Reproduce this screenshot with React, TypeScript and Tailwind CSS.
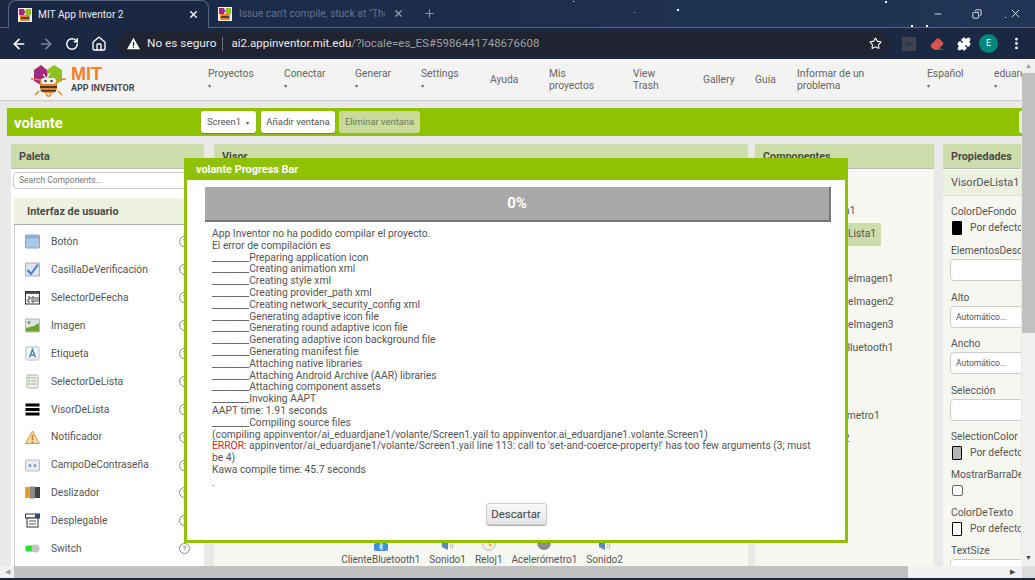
import React from 'react';
import { ArrowLeft, ArrowRight, RotateCw, Home, Star, Puzzle, MoreVertical, X, Plus, Minus, Copy, Eraser } from 'lucide-react';

function Favicon({ className }: { className: string }) {
  return (
    <svg viewBox="0 0 14 14" className={className}>
      <rect width="14" height="14" fill="#f4f4f4" />
      <polygon points="1,1 6,1 7,4 6,7 1,7" fill="#a6277f" />
      <polygon points="8,1 13,1 13,7 8,7 7,4" fill="#8dc21f" />
      <rect x="2" y="7" width="10" height="6" rx="1" fill="#f58220" />
      <rect x="3" y="9" width="8" height="2" fill="#444" />
    </svg>
  );
}

function Logo() {
  return (
    <svg viewBox="0 0 42 34" className="w-[42px] h-[34px] shrink-0">
      <polygon points="3,7 10,2 16,7 16,18 10,22 3,18" fill="#a6277f" transform="translate(1 0)" />
      <polygon points="17,7 24,2 32,7 32,18 24,22 17,18" fill="#8dc21f" />
      <path d="M1 16 L11 17 M36 16 L26 17" stroke="#f58220" strokeWidth="1.5" />
      <path d="M13 11 l3 4 M20 10 l-3 5" stroke="#fff" strokeWidth="1.2" />
      <rect x="10" y="15" width="17" height="15" rx="5" fill="#f58220" />
      <rect x="11" y="15" width="15" height="6" rx="3" fill="#f4f4f4" />
      <circle cx="15.5" cy="18" r="1.2" fill="#333" />
      <circle cx="21.5" cy="18" r="1.2" fill="#333" />
      <rect x="10" y="23" width="17" height="2" fill="#3a3a3a" />
      <rect x="11" y="27" width="15" height="1.6" fill="#3a3a3a" />
      <path d="M9 28 L5 32 M28 28 L32 32 M16 31 L18.5 34 L21 31" stroke="#f58220" strokeWidth="1.5" fill="none" />
    </svg>
  );
}

function PaletteIcon({ name }: { name: string }) {
  const cls = 'w-[15px] h-[15px] shrink-0';
  switch (name) {
    case 'Botón':
      return (
        <svg viewBox="0 0 15 15" className={cls}>
          <rect x="0.5" y="1" width="14" height="13" rx="1" fill="#a9c8e8" stroke="#8aa4c0" />
          <rect x="1" y="1.5" width="13" height="3" fill="#8fb0d6" />
        </svg>
      );
    case 'CasillaDeVerificación':
      return (
        <svg viewBox="0 0 15 15" className={cls}>
          <rect x="0.5" y="1" width="14" height="13" fill="#dfe3ea" stroke="#aab2bd" />
          <path d="M2.5 8 L6 12 L13 2.5" stroke="#3c7fd0" strokeWidth="2" fill="none" />
        </svg>
      );
    case 'SelectorDeFecha':
      return (
        <svg viewBox="0 0 15 15" className={cls}>
          <rect x="0.5" y="1.5" width="14" height="12.5" fill="#fff" stroke="#333" />
          <rect x="1" y="2" width="13" height="2" fill="#555" />
          <path d="M3 7 h2 v2 h-2 v3 h2 M7 7 h2 v5 h-2 z M11 7 v5 M13 7 v5" stroke="#333" strokeWidth="0.9" fill="none" />
        </svg>
      );
    case 'Imagen':
      return (
        <svg viewBox="0 0 15 15" className={cls}>
          <rect x="0.5" y="1" width="14" height="13" fill="#dfe3df" stroke="#b5bcb5" />
          <circle cx="4" cy="4.5" r="1.6" fill="#8a9a8a" />
          <path d="M1 13.5 L1 10 L9 8 L14 5 L14 13.5 Z" fill="#6aa52a" />
        </svg>
      );
    case 'Etiqueta':
      return (
        <svg viewBox="0 0 15 15" className={cls}>
          <rect x="1" y="1" width="13" height="13" rx="1" fill="#f1f4f8" stroke="#b4bdc8" />
          <path d="M4.5 11.5 L7.5 3.5 L10.5 11.5 M5.6 9 H9.4" stroke="#4a7cc0" strokeWidth="1.4" fill="none" />
        </svg>
      );
    case 'SelectorDeLista':
      return (
        <svg viewBox="0 0 15 15" className={cls}>
          <rect x="2" y="1" width="11" height="13" rx="1" fill="#f1f2ec" stroke="#aeb2a8" />
          <path d="M3.5 4 h1.5 M3.5 7 h1.5 M3.5 10 h1.5" stroke="#7db32e" strokeWidth="1.4" />
          <path d="M6 4 h5.5 M6 7 h5.5 M6 10 h5.5" stroke="#a8aca2" strokeWidth="1" />
        </svg>
      );
    case 'VisorDeLista':
      return (
        <svg viewBox="0 0 15 15" className={cls}>
          <rect x="0.5" y="1.5" width="14" height="3" fill="#000" />
          <rect x="0.5" y="6" width="14" height="3" fill="#000" />
          <rect x="0.5" y="10.5" width="14" height="3" fill="#000" />
        </svg>
      );
    case 'Notificador':
      return (
        <svg viewBox="0 0 15 15" className={cls}>
          <polygon points="7.5,1 14.5,13.5 0.5,13.5" fill="#f6d9a0" stroke="#d89a4a" />
          <path d="M7.5 5 V10" stroke="#d0812a" strokeWidth="1.6" />
          <circle cx="7.5" cy="12" r="0.9" fill="#d0812a" />
        </svg>
      );
    case 'CampoDeContraseña':
      return (
        <svg viewBox="0 0 15 15" className={cls}>
          <rect x="0.5" y="2" width="14" height="11" rx="1" fill="#e9edf2" stroke="#b8bec6" />
          <circle cx="5" cy="7.5" r="1.2" fill="#5a86c0" />
          <circle cx="10" cy="7.5" r="1.2" fill="#5a86c0" />
        </svg>
      );
    case 'Deslizador':
      return (
        <svg viewBox="0 0 15 15" className={cls}>
          <rect x="0" y="2" width="5" height="11" fill="#e8a33a" />
          <rect x="5" y="1.5" width="5" height="12" fill="#8a8a8a" />
          <rect x="10" y="2" width="5" height="11" fill="#444" />
          <path d="M2.5 4 v7" stroke="#a85d10" strokeDasharray="1 1.5" />
        </svg>
      );
    case 'Desplegable':
      return (
        <svg viewBox="0 0 15 15" className={cls}>
          <rect x="0.5" y="1" width="14" height="4" fill="#fff" stroke="#333" />
          <rect x="10" y="1" width="4.5" height="4" fill="#2a4f80" />
          <rect x="2" y="5" width="11" height="9" fill="#fff" stroke="#333" />
          <path d="M4 8 h7 M4 11 h7" stroke="#555" />
        </svg>
      );
    default:
      return (
        <svg viewBox="0 0 15 15" className={cls}>
          <rect x="0.5" y="4.5" width="9" height="6" rx="1.5" fill="#22e022" />
          <circle cx="10.5" cy="7.5" r="4" fill="#c4c4c4" />
        </svg>
      );
  }
}

function NonVisibleIcon({ name }: { name: string }) {
  const cls = 'w-[14px] h-[8px] shrink-0';
  if (name === 'ClienteBluetooth1') {
    return (
      <svg viewBox="0 0 14 8" className={cls}>
        <rect width="14" height="8" rx="2" fill="#3f8fe0" />
        <path d="M7 0 V7 M5 2 L9 5 L7 7 M5 5 L9 2 L7 0" stroke="#fff" strokeWidth="0.8" fill="none" />
      </svg>
    );
  }
  if (name === 'Reloj1') {
    return (
      <svg viewBox="0 0 14 8" className={cls}>
        <circle cx="7" cy="1" r="6.5" fill="#f3eee0" stroke="#bbb" />
        <path d="M7 1 L9 3" stroke="#f58220" strokeWidth="1.5" />
      </svg>
    );
  }
  if (name === 'Acelerómetro1') {
    return (
      <svg viewBox="0 0 14 8" className={cls}>
        <circle cx="7" cy="0" r="7" fill="#8c8c8c" />
      </svg>
    );
  }
  return (
    <svg viewBox="0 0 14 8" className={cls}>
      <polygon points="1,0 7,0 7,7 1,4" fill="#5a86c0" />
      <path d="M9 1 q2 2 0 4 M11 0 q2 3 0 6" stroke="#aaa" strokeWidth="0.8" fill="none" />
    </svg>
  );
}

function HelpMark() {
  return (
    <span className="ml-auto mr-[14px] w-[11px] h-[11px] rounded-full border border-[#888] text-[8px] leading-[9px] text-center text-[#666] shrink-0">
      ?
    </span>
  );
}

const navItems = [
  { label: 'Proyectos', width: 'w-[76px]', caret: true },
  { label: 'Conectar', width: 'w-[71px]', caret: true },
  { label: 'Generar', width: 'w-[66px]', caret: true },
  { label: 'Settings', width: 'w-[69px]', caret: true },
  { label: 'Ayuda', width: 'w-[59px]' },
  { label: 'Mis\nproyectos', width: 'w-[84px]' },
  { label: 'View\nTrash', width: 'w-[70px]' },
  { label: 'Gallery', width: 'w-[52px]' },
  { label: 'Guía', width: 'w-[42px]' },
  { label: 'Informar de un\nproblema', width: 'w-[130px]' },
  { label: 'Español', width: 'w-[67px]', caret: true },
  { label: 'eduardjane1', width: 'w-[28px]', caret: true },
];

const paletteItems = [
  'Botón',
  'CasillaDeVerificación',
  'SelectorDeFecha',
  'Imagen',
  'Etiqueta',
  'SelectorDeLista',
  'VisorDeLista',
  'Notificador',
  'CampoDeContraseña',
  'Deslizador',
  'Desplegable',
  'Switch',
];

const treeItems = [
  'Etiqueta1',
  'VisorDeLista1',
  'Botón1',
  'MarcoDeImagen1',
  'MarcoDeImagen2',
  'MarcoDeImagen3',
  'ClienteBluetooth1',
  'Sonido1',
  'Reloj1',
  'Acelerómetro1',
  'Sonido2',
];

const logLines = [
  'App Inventor no ha podido compilar el proyecto.',
  'El error de compilación es',
  '________Preparing application icon',
  '________Creating animation xml',
  '________Creating style xml',
  '________Creating provider_path xml',
  '________Creating network_security_config xml',
  '________Generating adaptive icon file',
  '________Generating round adaptive icon file',
  '________Generating adaptive icon background file',
  '________Generating manifest file',
  '________Attaching native libraries',
  '________Attaching Android Archive (AAR) libraries',
  '________Attaching component assets',
  '________Invoking AAPT',
  'AAPT time: 1.91 seconds',
  '________Compiling source files',
  '(compiling appinventor/ai_eduardjane1/volante/Screen1.yail to appinventor.ai_eduardjane1.volante.Screen1)',
];

const nonVisible = ['ClienteBluetooth1', 'Sonido1', 'Reloj1', 'Acelerómetro1', 'Sonido2'];

function PropLabel({ children, className = '' }: { children: React.ReactNode; className?: string }) {
  return <div className={`text-[10.3px] leading-[14px] text-[#555] whitespace-nowrap ${className}`}>{children}</div>;
}

function Swatch({ color, label }: { color: string; label: string }) {
  return (
    <div className="flex items-center h-[14px] mt-[2px] pl-[1px]">
      <span className={`w-[10px] h-[14px] shrink-0 rounded-[1px] border border-black ${color}`} />
      <span className="ml-[8px] text-[10.3px] leading-[14px] text-[#555] whitespace-nowrap">{label}</span>
    </div>
  );
}

function PropBox({ text }: { text?: string }) {
  return (
    <div className="h-[22px] w-[90px] -ml-px mt-[1px] bg-white border border-[#ccc] rounded-[4px] pl-[5px] text-[8.5px] leading-[20px] text-[#555]">
      {text}
    </div>
  );
}

export default function App() {
  return (
    <div className="relative w-[1035px] h-[580px] overflow-hidden bg-[#e9e9e9] font-['Roboto',sans-serif]">
      {/* browser */}
      <div className="relative h-[59px] bg-[#1b2843] text-white">
        <div className="flex items-end h-[28px] pl-[8px] bg-gradient-to-r from-[#1a2845] to-[#213556] border-b border-[#59637a]">
          <div className="flex items-center w-[201px] h-[28px] -mb-px pl-[9px] pr-[9px] bg-[#1b2843] rounded-t-[8px] border border-b-0 border-[#59637a]">
            <Favicon className="w-[14px] h-[14px] shrink-0" />
            <span className="ml-[6px] text-[10.2px] text-[#e8eaed] whitespace-nowrap">MIT App Inventor 2</span>
            <X className="ml-auto w-[11px] h-[11px]" strokeWidth={3} />
          </div>
          <div className="flex items-center w-[200px] h-[27px] pl-[9px] pr-[5px]">
            <Favicon className="w-[14px] h-[14px] shrink-0" />
            <span className="ml-[7px] w-[146px] overflow-hidden text-[10.2px] text-[#67728a] whitespace-nowrap">
              Issue can't compile, stuck at "The
            </span>
            <X className="ml-auto w-[11px] h-[11px] text-[#9aa0ac]" strokeWidth={2.5} />
          </div>
          <Plus className="ml-[14px] mb-[7px] w-[13px] h-[13px] text-[#8a93a6]" />
          <div className="ml-auto flex items-center h-[27px] pr-[13px]">
            <Minus className="w-[10px] h-[10px]" />
            <Copy className="ml-[29px] w-[10px] h-[10px] -scale-x-100" />
            <X className="ml-[27px] w-[13px] h-[13px]" strokeWidth={1.5} />
          </div>
        </div>
        <div className="flex items-center h-[31px] pl-[11px] pr-[9px]">
          <ArrowLeft className="w-[16px] h-[16px]" strokeWidth={2.5} />
          <ArrowRight className="ml-[11px] w-[16px] h-[16px] text-[#7c8496]" strokeWidth={2.5} />
          <RotateCw className="ml-[11px] w-[14px] h-[14px]" strokeWidth={2.5} />
          <Home className="ml-[12px] w-[16px] h-[16px]" strokeWidth={2} />
          <div className="ml-[11px] flex items-center w-[772px] h-[24px] bg-[#202330] rounded-full pl-[9px] pr-[8px]">
            <svg viewBox="0 0 16 16" className="w-[13px] h-[13px] shrink-0">
              <polygon points="8,1 16,15 0,15" fill="#fff" />
              <rect x="7.2" y="6" width="1.6" height="5" fill="#202330" />
              <rect x="7.2" y="12" width="1.6" height="1.6" fill="#202330" />
            </svg>
            <span className="ml-[7px] text-[11.8px] text-[#e8eaed] whitespace-nowrap">No es seguro</span>
            <span className="ml-[6px] w-px h-[14px] bg-[#70747f]" />
            <span className="ml-[8px] text-[11.5px] text-[#e8eaed] whitespace-nowrap">
              ai2.appinventor.mit.edu<span className="text-[#9aa0a6]">/?locale=es_ES#5986441748676608</span>
            </span>
            <Star className="ml-auto w-[13px] h-[13px]" strokeWidth={2} />
          </div>
          <span className="ml-[12px] w-[14px] h-[14px] bg-[#3f444e] text-[8px] leading-[14px] text-center text-[#1d2b46]">Se</span>
          <Eraser className="ml-[14px] w-[14px] h-[14px] text-[#d9534f] fill-[#d9534f]" />
          <Puzzle className="ml-[13px] w-[14px] h-[14px] fill-white" />
          <span className="ml-[8px] w-[19px] h-[19px] rounded-full bg-[#00897b] text-[9px] leading-[19px] text-center">E</span>
          <MoreVertical className="ml-[11px] w-[15px] h-[15px]" strokeWidth={2.5} />
        </div>
        {/* theme stars */}
        <span className="absolute left-[573px] top-[1px] w-px h-px bg-white" />
        <span className="absolute left-[634px] top-[12px] w-px h-px bg-[#9fb2cc]" />
        <span className="absolute left-[677px] top-[9px] w-[2px] h-[2px] bg-white" />
        <span className="absolute left-[885px] top-[1px] w-[2px] h-[2px] bg-white" />
        <span className="absolute left-[911px] top-[25px] w-[2px] h-[2px] bg-white" />
        <span className="absolute left-[926px] top-[25px] w-[2px] h-[2px] bg-white" />
        <span className="absolute left-[1005px] top-[17px] w-px h-px bg-white" />
      </div>

      <div className="flex h-[507px]">
        <div className="flex flex-col w-[1022px]">
          {/* app nav */}
          <div className="flex items-center h-[41px] bg-[#f3f3f3] shadow-[0_1px_1px_#ccc] overflow-hidden">
            <div className="flex items-center w-[208px] shrink-0 pl-[30px]">
              <Logo />
              <div className="-ml-[1px] flex flex-col">
                <span className="text-[18px] leading-[14px] font-bold text-[#f58220] font-['Liberation_Sans',sans-serif]">MIT</span>
                <span className="mt-[2px] text-[9px] leading-[10px] font-bold text-[#4a4a4a] whitespace-nowrap">APP INVENTOR</span>
              </div>
            </div>
            {navItems.map((item) => (
              <div
                key={item.label}
                className={`${item.width} shrink-0 overflow-hidden text-[10.3px] leading-[12px] text-[#666] whitespace-pre`}
              >
                {item.label}
                {item.caret && <div className="text-[6px] leading-[12px]">▾</div>}
              </div>
            ))}
          </div>

          {/* project toolbar */}
          <div className="mt-[8px] ml-[7px] flex items-center h-[28px] bg-[#8fc202]">
            <span className="pl-[7px] pt-[3px] w-[194px] text-[14.8px] font-bold text-white">volante</span>
            <div className="flex h-[22px] items-center px-[6px] w-[55px] rounded-[3px] bg-white shadow-[0_1px_1px_#777] text-[9.4px] text-[#555]">
              Screen1<span className="ml-[5px] text-[6px]">▾</span>
            </div>
            <div className="ml-[5px] flex h-[22px] items-center justify-center w-[74px] rounded-[3px] bg-white shadow-[0_1px_1px_#777] text-[9.5px] text-[#555]">
              Añadir ventana
            </div>
            <div className="ml-[4px] flex h-[22px] items-center justify-center w-[81px] rounded-[3px] bg-[#c9da9b] text-[9.4px] text-[#707a5b]">
              Eliminar ventana
            </div>
            <span className="ml-auto w-[3px] h-[22px] rounded-l-[2px] bg-[#e6ecd0]" />
          </div>

          {/* panels */}
          <div className="mt-[8px] flex flex-1 min-h-0 pl-[11px]">
            <div className="flex flex-col w-[193px] bg-white">
              <div className="h-[25px] bg-[#cddcab] border-b border-[#bbb] pl-[8px] text-[10.8px] leading-[25px] font-bold text-[#4a4a4a]">Paleta</div>
              <div className="pt-[3px] pl-[2px] pr-[2px]">
                <div className="h-[17px] bg-white border border-[#ccc] rounded-[4px] pl-[5px] text-[8.5px] leading-[15px] text-[#777]">Search Components...</div>
              </div>
              <div className="mt-[9px] ml-[3px] h-[27px] bg-[#edf1df] border-b border-[#aaa] pl-[13px] text-[10.8px] leading-[27px] font-bold text-[#4a4a4a]">Interfaz de usuario</div>
              <div className="flex-1 ml-[3px] border-l border-[#ccc] pt-[3px]">
                {paletteItems.map((name) => (
                  <div key={name} className="flex items-center h-[27.9px] pl-[10px]">
                    <PaletteIcon name={name} />
                    <span className="ml-[11px] text-[10.3px] text-[#555]">{name}</span>
                    <HelpMark />
                  </div>
                ))}
              </div>
            </div>

            <div className="ml-[10px] flex flex-col w-[534px] bg-[#f7f7f1]">
              <div className="h-[25px] bg-[#cddcab] border-b border-[#bbb] pl-[8px] text-[10.8px] leading-[25px] font-bold text-[#4a4a4a]">Visor</div>
              <div className="flex-1 flex flex-col justify-end items-center pl-[2px]">
                <div className="flex gap-[9px]">
                  {nonVisible.map((name) => (
                    <div key={name} className="flex flex-col items-center">
                      <NonVisibleIcon name={name} />
                      <span className="mt-[2px] text-[10px] leading-[13px] text-[#555]">{name}</span>
                    </div>
                  ))}
                </div>
              </div>
            </div>

            <div className="ml-[7px] flex flex-col w-[179px] bg-[#f7f7f1]">
              <div className="h-[25px] bg-[#cddcab] border-b border-[#bbb] pl-[8px] text-[10.8px] leading-[25px] font-bold text-[#4a4a4a]">Componentes</div>
              <div className="pt-[28px] pl-[57px]">
                {treeItems.map((name) => (
                  <div key={name} className="h-[22.8px]">
                    <span className={`inline-block text-[10.3px] leading-[22.8px] text-[#555] ${name === 'VisorDeLista1' ? 'bg-[#cddcab] pr-[5px] pl-[4px] -ml-[4px]' : ''}`}>
                      {name}
                    </span>
                  </div>
                ))}
              </div>
            </div>

            <div className="ml-[9px] flex flex-col w-[78px] bg-[#f7f7f1] overflow-hidden">
              <div className="h-[25px] bg-[#cddcab] border-b border-[#bbb] pl-[8px] text-[10.8px] leading-[25px] font-bold text-[#4a4a4a] whitespace-nowrap">Propiedades</div>
              <div className="mt-[1px] h-[26px] bg-[#edf1df] border-b border-[#ddd] pl-[8px] text-[11px] leading-[26px] text-[#555] whitespace-nowrap">VisorDeLista1</div>
              <div className="pl-[8px] pt-[9px]">
                <PropLabel>ColorDeFondo</PropLabel>
                <Swatch color="bg-black" label="Por defecto" />
                <PropLabel className="mt-[9px]">ElementosDesde</PropLabel>
                <PropBox />
                <PropLabel className="mt-[10px]">Alto</PropLabel>
                <PropBox text="Automático..." />
                <PropLabel className="mt-[9px]">Ancho</PropLabel>
                <PropBox text="Automático..." />
                <PropLabel className="mt-[10px]">Selección</PropLabel>
                <PropBox />
                <PropLabel className="mt-[9px]">SelectionColor</PropLabel>
                <Swatch color="bg-[#b5b5b5]" label="Por defecto" />
                <PropLabel className="mt-[8px]">MostrarBarraDeBúsqueda</PropLabel>
                <span className="block mt-[3px] ml-[1px] w-[11px] h-[11px] bg-white border border-[#666] rounded-[2px]" />
                <PropLabel className="mt-[10px]">ColorDeTexto</PropLabel>
                <Swatch color="bg-white" label="Por defecto" />
                <PropLabel className="mt-[8px]">TextSize</PropLabel>
                <PropBox />
              </div>
            </div>
          </div>
        </div>

        {/* vertical scrollbar */}
        <div className="flex flex-col items-center w-[13px] bg-[#f1f1f1]">
          <span className="mt-[3px] text-[7px] leading-[9px] text-[#999]">▲</span>
          <span className="mt-[2px] w-[13px] h-[260px] bg-[#c1c1c1]" />
          <span className="mt-auto mb-[3px] text-[7px] leading-[9px] text-[#444]">▼</span>
        </div>
      </div>

      {/* horizontal scrollbar and taskbar strip */}
      <div className="flex items-center h-[12px] bg-[#f1f1f1]">
        <span className="w-[14px] text-[7px] text-center text-[#999]">◀</span>
        <span className="w-[894px] h-[12px] bg-[#c1c1c1]" />
        <span className="ml-[102px] w-[12px] text-[7px] text-[#444]">▶</span>
        <span className="ml-auto w-[13px] h-[12px] bg-[#dcdcdc]" />
      </div>
      <div className="h-[2px] bg-[#1b2843]" />

      {/* progress dialog */}
      <div className="absolute left-[184px] top-[158px] flex flex-col w-[664px] h-[385px] border-[3px] border-t-0 border-[#8fc202] bg-white">
        <div className="h-[22px] -mx-[3px] bg-[#8fc202] pl-[12px] text-[10.9px] leading-[24px] font-bold text-white">volante Progress Bar</div>
        <div className="mt-[7px] ml-[18px] w-[626px] h-[35px] bg-[#a9a9a9] border-b-2 border-r-2 border-[#777] text-center text-[15px] leading-[33px] font-bold text-white">0%</div>
        <div className="mt-[6px] ml-[25px] mr-[25px] text-[10.3px] leading-[11.8px] text-[#555]">
          {logLines.map((line) => (
            <div key={line} className="whitespace-nowrap">{line}</div>
          ))}
          <div>
            <span className="text-[#e8141c]">ERROR</span>: appinventor/ai_eduardjane1/volante/Screen1.yail line 113: call to 'set-and-coerce-property!' has too few arguments (3; must be 4)
          </div>
          <div>Kawa compile time: 45.7 seconds</div>
          <div className="mt-[1px]">.</div>
        </div>
        <div className="mt-auto mb-[15px] self-center h-[22px] w-[61px] rounded-[3px] border border-[#ccc] bg-gradient-to-b from-[#f8f8f8] to-[#e4e4e4] shadow-[0_1px_1px_#aaa] text-center text-[11.4px] leading-[20px] text-[#444]">
          Descartar
        </div>
      </div>
    </div>
  );
}
